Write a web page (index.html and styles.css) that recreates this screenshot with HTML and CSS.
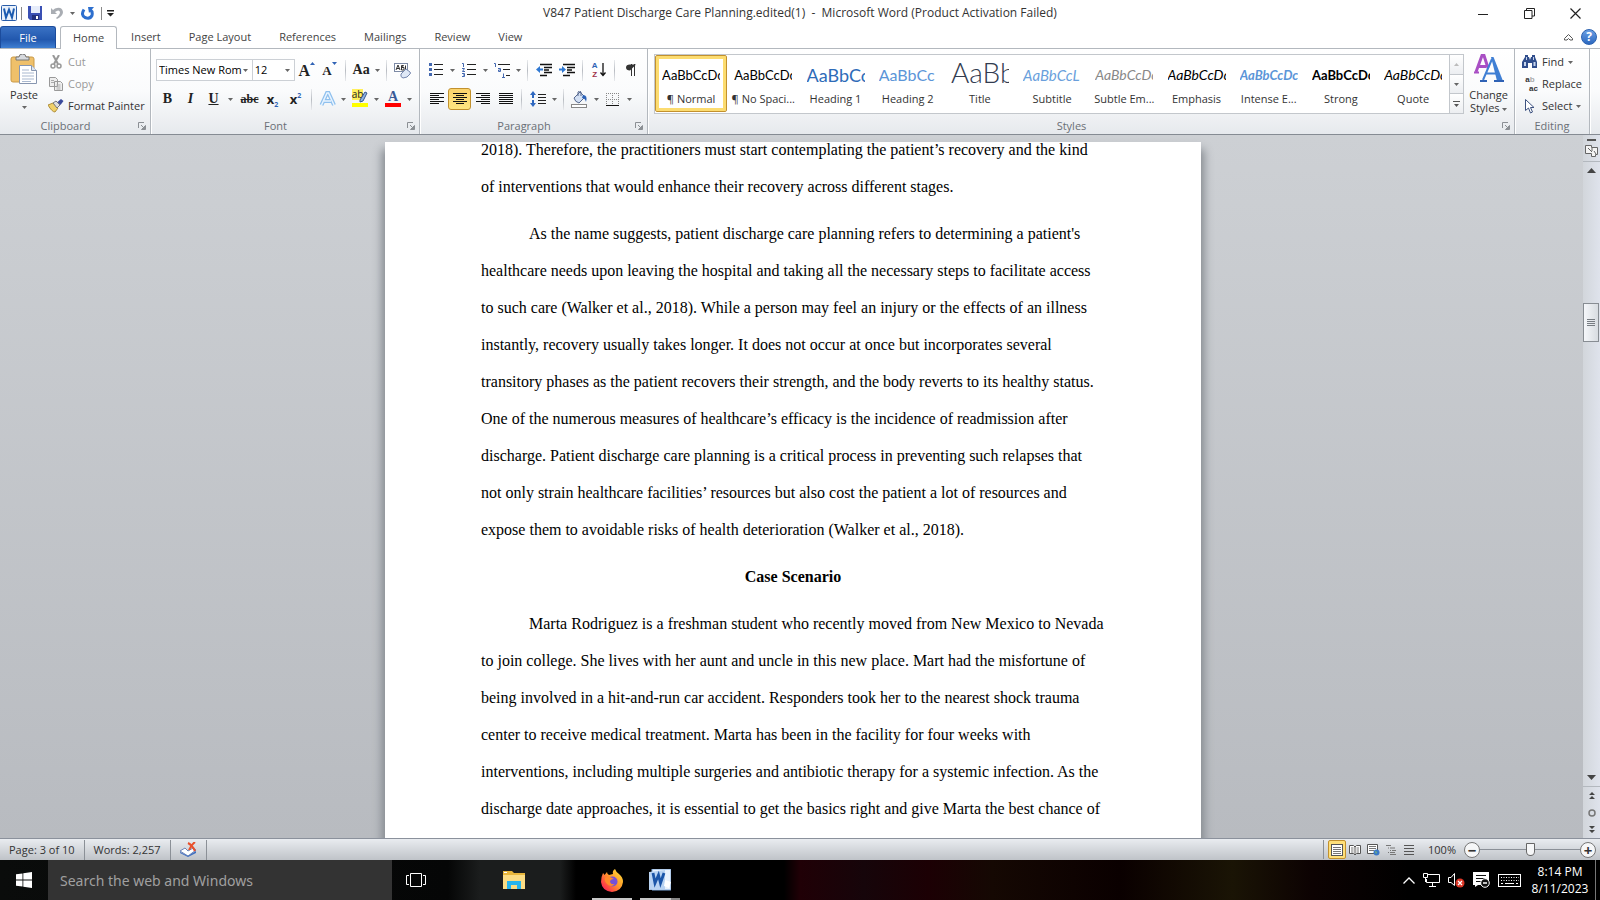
FILE: index.html
```
<!DOCTYPE html>
<html lang="en">
<head>
    <meta charset="UTF-8">
    <meta name="viewport" content="width=device-width, initial-scale=1.0">
    <title>V847 Patient Discharge Care Planning.edited(1) - Microsoft Word</title>
    <link rel="stylesheet" href="styles.css">
</head>
<body>
    <!-- shared icons -->
    <svg class="defs" aria-hidden="true">
        <symbol id="caret" viewBox="0 0 5 3"><path d="M0 0h5L2.500 3z" fill="#666"/></symbol>
        <symbol id="launcher" viewBox="0 0 8 8"><path d="M.5 6V.5H6" fill="none" stroke="#8b8f94"/><path d="M3 3l3 3M7.500 3.500v4h-4z" fill="#8b8f94" stroke="#8b8f94"/></symbol>
    </svg>

    <header class="titlebar">
        <div class="quick">
            <svg width="16" height="16" viewBox="0 0 16 16"><rect x=".5" y=".5" width="15" height="15" rx="1" fill="#e9f1fb" stroke="#2a5da8"/><path d="M3 3.500l2 9 3-8 3 8 2-9" fill="none" stroke="#1c5bb0" stroke-width="2"/></svg>
            <span class="bar"></span>
            <button class="icon" aria-label="Save"><svg width="14" height="14" viewBox="0 0 14 14"><path d="M0 0h14v14H2l-2-2z" fill="#3a50b4"/><rect x="3" width="9" height="7" fill="#e6ecfa"/><rect x="4" y="9" width="7" height="5" fill="#22307c"/><rect x="8" y="10" width="2" height="3" fill="#fff"/></svg></button>
            <button class="icon" aria-label="Undo"><svg width="14" height="13" viewBox="0 0 14 13"><path d="M1 1v6h6L5 5q4-3 5 0 0 3-4 6l1 1q6-3 6-7-1-5-6-4Q5 1 3 3z" fill="#a9adb3"/></svg></button>
            <svg class="caret" width="5" height="3"><use href="#caret"/></svg>
            <button class="icon" aria-label="Repeat"><svg width="14" height="13" viewBox="0 0 14 13"><path d="M3 2.500Q-.5 8 4 10.500q5 2 7-2 1-4-2-6" fill="none" stroke="#2d6fce" stroke-width="3"/><path d="M7 0h6L8 6z" fill="#2d6fce"/></svg></button>
            <span class="bar"></span>
            <button class="icon small" aria-label="Customize Quick Access Toolbar"><svg width="7" height="7" viewBox="0 0 7 7"><path d="M0 0h7v1.500H0zM0 3h7L3.500 6.500z" fill="#222"/></svg></button>
        </div>
        <div class="doc-title">V847 Patient Discharge Care Planning.edited(1)&nbsp; -&nbsp; Microsoft Word (Product Activation Failed)</div>
        <div class="window-buttons">
            <button aria-label="Minimize"><svg width="11" height="11" viewBox="0 0 11 11"><path d="M0 6.500h10" stroke="#222"/></svg></button>
            <button aria-label="Restore"><svg width="11" height="11" viewBox="0 0 11 11"><path d="M.5 2.500h7.500v8H.5zM2.500 2.500v-2h8v7.500H8" fill="none" stroke="#222"/></svg></button>
            <button aria-label="Close"><svg width="11" height="11" viewBox="0 0 11 11"><path d="M.5.5l10 10M10.500.5l-10 10" stroke="#222" stroke-width="1.200"/></svg></button>
        </div>
    </header>

    <nav class="tabs">
        <button class="tab file">File</button>
        <button class="tab active">Home</button>
        <button class="tab">Insert</button>
        <button class="tab">Page Layout</button>
        <button class="tab">References</button>
        <button class="tab">Mailings</button>
        <button class="tab">Review</button>
        <button class="tab">View</button>
        <span class="tabs-end">
            <button class="icon" aria-label="Minimize the Ribbon"><svg width="9" height="7" viewBox="0 0 9 7"><path d="M.5 4.500l4-4 4 4v1.500H6L4.500 4.500 3 6H.5z" fill="#fff" stroke="#555"/></svg></button>
            <button class="help" aria-label="Help">?</button>
        </span>
    </nav>

    <div class="ribbon">
        <section class="group clipboard">
            <div class="group-body">
                <button class="paste">
                    <svg width="28" height="30" viewBox="0 0 28 30"><rect x="1" y="3" width="23" height="25" rx="2" fill="#efc06a" stroke="#c99a48"/><path d="M6 6V3h3q0-3 3.500-3T16 3h3v3z" fill="#d6d9de" stroke="#777"/><path d="M9.500 11.500h12l5 5v13h-17z" fill="#fff" stroke="#8796b0"/><path d="M21.500 11.500v5h5" fill="#dde6f3" stroke="#8796b0"/><path d="M12 16h7M12 19h12M12 22h12M12 25h12M12 27.500h9" stroke="#a9b8cf"/></svg>
                    <span>Paste</span>
                    <svg class="caret" width="5" height="3"><use href="#caret"/></svg>
                </button>
                <div class="stack">
                    <button class="line disabled"><svg width="16" height="14" viewBox="0 0 16 14"><path d="M5 0l5 9M11 0L6 9" stroke="#999" stroke-width="2"/><circle cx="5" cy="11" r="2" fill="none" stroke="#999" stroke-width="1.500"/><circle cx="11" cy="11" r="2" fill="none" stroke="#999" stroke-width="1.500"/></svg>Cut</button>
                    <button class="line disabled"><svg width="16" height="14" viewBox="0 0 16 14"><path d="M1.500.5h6l2 2v7h-8zM6.500 4.500h6l2 2v7h-8z" fill="#eee" stroke="#999"/><path d="M3 3.500h3M3 5.500h3M8.500 8h4M8.500 10h4M8.500 12h4" stroke="#aaa"/></svg>Copy</button>
                    <button class="line"><svg width="16" height="14" viewBox="0 0 16 14"><path d="M0 6l5-2 5 5-3 4q-3 0-7-7z" fill="#f0d069" stroke="#b0903c"/><path d="M5 4l3-2 4 4-3 3z" fill="#ddd" stroke="#777"/><path d="M9.500 3L13 0l2.500 2-3 4z" fill="#3a4a9c"/></svg>Format Painter</button>
                </div>
            </div>
            <footer class="group-label"><span>Clipboard</span><svg width="8" height="8"><use href="#launcher"/></svg></footer>
        </section>

        <section class="group font">
            <div class="group-body rows">
                <div class="row">
                    <div class="combo family"><select aria-label="Font"><option>Times New Rom</option></select><svg class="caret" width="5" height="3"><use href="#caret"/></svg></div>
                    <div class="combo size"><select aria-label="Font Size"><option>12</option></select><svg class="caret" width="5" height="3"><use href="#caret"/></svg></div>
                    <button class="tool serif grow" aria-label="Grow Font">A<svg width="5" height="3" viewBox="0 0 5 3"><path d="M0 3h5L2.500 0z" fill="#2f62b5"/></svg></button>
                    <button class="tool serif shrink" aria-label="Shrink Font">A<svg width="5" height="3" viewBox="0 0 5 3"><path d="M0 0h5L2.500 3z" fill="#2f62b5"/></svg></button>
                    <i class="sep"></i>
                    <button class="tool serif case">Aa</button><button class="drop" aria-label="Change Case"><svg width="5" height="3"><use href="#caret"/></svg></button>
                    <i class="sep"></i>
                    <button class="tool" aria-label="Clear Formatting"><svg width="17" height="17" viewBox="0 0 17 17"><rect x=".5" y="1.500" width="13" height="8" fill="#fff" stroke="#7c8aa5"/><path d="M2 8l2-5 2 5M3 6.500h2M7.500 8V3.500h2L8 5.500h2V8zM11.500 3.500v4" fill="none" stroke="#333"/><path d="M7 12l5-5 4 3q1 1 0 2l-3 3-4 1q-3-1-2-4z" fill="#dfe8f6" stroke="#7486ad"/></svg></button>
                </div>
                <div class="row">
                    <div class="cluster">
                        <button class="tool serif bold">B</button>
                        <button class="tool serif italic">I</button>
                        <button class="tool serif underline">U</button><button class="drop" aria-label="Underline style"><svg width="5" height="3"><use href="#caret"/></svg></button>
                    </div>
                    <div class="cluster">
                        <button class="tool strike">abc</button>
                        <button class="tool script">x<sub>2</sub></button>
                        <button class="tool script">x<sup>2</sup></button>
                    </div>
                    <i class="sep"></i>
                    <button class="tool" aria-label="Text Effects"><svg width="17" height="16" viewBox="0 0 17 16"><path d="M2.500 14L8 2h1.500L15 14M5 10h7" fill="none" stroke="#8fc0ee" stroke-width="4"/><path d="M2.500 14L8 2h1.500L15 14M5 10h7" fill="none" stroke="#e9f4ff" stroke-width="1.500"/></svg></button><button class="drop" aria-label="Text Effects menu"><svg width="5" height="3"><use href="#caret"/></svg></button>
                    <button class="tool marker" aria-label="Text Highlight Color"><span>ab</span><svg width="16" height="16" viewBox="0 0 16 16"><path d="M8 9l5-8 2 1-4 8-3 1z" fill="#8fb2e2" stroke="#36568f"/><path d="M0 12h16v4H0z" fill="#ff0"/></svg></button><button class="drop" aria-label="Highlight menu"><svg width="5" height="3"><use href="#caret"/></svg></button>
                    <button class="tool serif color" aria-label="Font Color">A</button><button class="drop" aria-label="Font Color menu"><svg width="5" height="3"><use href="#caret"/></svg></button>
                </div>
            </div>
            <footer class="group-label"><span>Font</span><svg width="8" height="8"><use href="#launcher"/></svg></footer>
        </section>

        <section class="group paragraph">
            <div class="group-body rows">
                <div class="row">
                    <button class="tool" aria-label="Bullets"><svg width="14" height="14" viewBox="0 0 14 14"><path d="M0 0h3v3H0zM0 5h3v3H0zM0 10h3v3H0z" fill="#4368b0"/><path d="M5 1.500h9M5 6.500h9M5 11.500h9" stroke="#222"/></svg></button><button class="drop" aria-label="Bullets menu"><svg width="5" height="3"><use href="#caret"/></svg></button>
                    <button class="tool" aria-label="Numbering"><svg width="14" height="14" viewBox="0 0 14 14"><path d="M0 .5h1.500V4M0 5.500h2.500L.5 8.500H3M0 10.500h2.500v3H0M1 12h1" fill="none" stroke="#4368b0"/><path d="M5 1.500h9M5 6.500h9M5 11.500h9" stroke="#222"/></svg></button><button class="drop" aria-label="Numbering menu"><svg width="5" height="3"><use href="#caret"/></svg></button>
                    <button class="tool" aria-label="Multilevel List"><svg width="16" height="15" viewBox="0 0 16 15"><path d="M0 .5h1.500V4M4 5.500h2.500v3H4.500V7h2M9.500 10.500v4M8 14.500h3" fill="none" stroke="#4368b0"/><path d="M4 1.500h12M9 6.500h7M12 12.500h4" stroke="#222"/></svg></button><button class="drop" aria-label="Multilevel menu"><svg width="5" height="3"><use href="#caret"/></svg></button>
                    <i class="sep"></i>
                    <button class="tool" aria-label="Decrease Indent"><svg width="16" height="14" viewBox="0 0 16 14"><path d="M4 1.500h12M8 4.500h8M8 7h5M8 9.500h8M4 12.500h7" stroke="#111" stroke-width="1.500"/><path d="M0 6.500L4 3v2.500h3v2H4V10z" fill="#2f78d2"/></svg></button>
                    <button class="tool" aria-label="Increase Indent"><svg width="16" height="14" viewBox="0 0 16 14"><path d="M4 1.500h12M8 4.500h8M8 7h5M8 9.500h8M4 12.500h7" stroke="#111" stroke-width="1.500"/><path d="M7 6.500L3 3v2.500H0v2h3V10z" fill="#2f78d2"/></svg></button>
                    <i class="sep"></i>
                    <button class="tool sort" aria-label="Sort"><span class="az"><b>A</b><b>Z</b></span><svg width="6" height="14" viewBox="0 0 6 14"><path d="M3 0v12M.5 9.500L3 12.500l2.500-3" fill="none" stroke="#111" stroke-width="1.300"/></svg></button>
                    <i class="sep"></i>
                    <button class="tool" aria-label="Show/Hide ¶"><svg width="10" height="13" viewBox="0 0 10 13"><path d="M10 .5H4q-4 0-4 3t4 3z" fill="#333"/><path d="M5.500 0v12M8.500 0v12" stroke="#333"/></svg></button>
                </div>
                <div class="row">
                    <button class="tool" aria-label="Align Left"><svg width="14" height="12" viewBox="0 0 14 12"><path d="M0 .5h14M0 2.500h9M0 4.500h14M0 6.500h9M0 8.500h14M0 10.500h9" stroke="#111"/></svg></button>
                    <button class="tool selected" aria-label="Center"><svg width="14" height="12" viewBox="0 0 14 12"><path d="M0 .5h14M3 2.500h8M0 4.500h14M3 6.500h8M0 8.500h14M3 10.500h8" stroke="#111"/></svg></button>
                    <button class="tool" aria-label="Align Right"><svg width="14" height="12" viewBox="0 0 14 12"><path d="M0 .5h14M5 2.500h9M0 4.500h14M5 6.500h9M0 8.500h14M5 10.500h9" stroke="#111"/></svg></button>
                    <button class="tool" aria-label="Justify"><svg width="14" height="12" viewBox="0 0 14 12"><path d="M0 .5h14M0 2.500h14M0 4.500h14M0 6.500h14M0 8.500h14M0 10.500h14" stroke="#111"/></svg></button>
                    <i class="sep"></i>
                    <button class="tool" aria-label="Line Spacing"><svg width="16" height="16" viewBox="0 0 16 16"><path d="M3 0L0 4h2v3h2V4h2zM3 16l-3-4h2V9h2v3h2z" fill="#2f68c0"/><path d="M8 3.500h8M8 6.500h8M8 9.500h8M8 12.500h8" stroke="#222"/></svg></button><button class="drop" aria-label="Line Spacing menu"><svg width="5" height="3"><use href="#caret"/></svg></button>
                    <i class="sep"></i>
                    <button class="tool" aria-label="Shading"><svg width="17" height="17" viewBox="0 0 17 17"><path d="M3 7l6-6 5 5-6 6q-4-1-5-5z" fill="#d3e0f4" stroke="#56688f"/><path d="M7 5V1q2-2 3 0v4" fill="none" stroke="#56688f"/><path d="M12 4q5 0 3 7-1-4-4-4z" fill="#2b62b8"/><rect x=".5" y="13.500" width="15" height="3" fill="#fff" stroke="#888"/></svg></button><button class="drop" aria-label="Shading menu"><svg width="5" height="3"><use href="#caret"/></svg></button>
                    <button class="tool" aria-label="Borders"><svg width="13" height="13" viewBox="0 0 13 13"><path d="M0 .5h13M0 6.500h13M.5 0v13M6.500 0v13M12.500 0v13" stroke="#888" stroke-dasharray="1 1"/><path d="M0 12.500h13" stroke="#111"/></svg></button><button class="drop" aria-label="Borders menu"><svg width="5" height="3"><use href="#caret"/></svg></button>
                </div>
            </div>
            <footer class="group-label"><span>Paragraph</span><svg width="8" height="8"><use href="#launcher"/></svg></footer>
        </section>

        <section class="group styles">
            <div class="group-body">
                <div class="gallery">
                    <button class="style current"><span class="sample">AaBbCcDc</span><span>¶ Normal</span></button>
                    <button class="style"><span class="sample">AaBbCcDc</span><span>¶ No Spaci...</span></button>
                    <button class="style"><span class="sample h1">AaBbCc</span><span>Heading 1</span></button>
                    <button class="style"><span class="sample h2">AaBbCc</span><span>Heading 2</span></button>
                    <button class="style"><span class="sample title">AaBb</span><span>Title</span></button>
                    <button class="style"><span class="sample subtitle">AaBbCcL</span><span>Subtitle</span></button>
                    <button class="style"><span class="sample subtle">AaBbCcDc</span><span>Subtle Em...</span></button>
                    <button class="style"><span class="sample em">AaBbCcDc</span><span>Emphasis</span></button>
                    <button class="style"><span class="sample intense">AaBbCcDc</span><span>Intense E...</span></button>
                    <button class="style"><span class="sample strong">AaBbCcDc</span><span>Strong</span></button>
                    <button class="style"><span class="sample em">AaBbCcDc</span><span>Quote</span></button>
                    <div class="gallery-scroll">
                        <button class="off" aria-label="Row up"><svg width="5" height="3" viewBox="0 0 5 3"><path d="M0 3h5L2.500 0z" fill="#bbb"/></svg></button>
                        <button aria-label="Row down"><svg width="5" height="3"><use href="#caret"/></svg></button>
                        <button aria-label="More styles"><svg width="7" height="6" viewBox="0 0 7 6"><path d="M0 0h7v1H0zM1 3h5L3.500 6z" fill="#555"/></svg></button>
                    </div>
                </div>
                <button class="change">
                    <svg width="30" height="28" viewBox="0 0 30 28"><path d="M2 18L8 1.500h2L14 14M4 12.500h8" fill="none" stroke="#a94fc4" stroke-width="3"/><path d="M0 18.500h5" stroke="#a94fc4" stroke-width="2"/><path d="M17 3h2.500L29 27h-6z" fill="#3f7fd4"/><path d="M9 26L18 5M12.500 19.500h11" fill="none" stroke="#3f7fd4" stroke-width="2"/><path d="M6 27h7M20 27h10" stroke="#2f62b5" stroke-width="2"/></svg>
                    <span>Change</span>
                    <span>Styles <svg class="caret" width="5" height="3"><use href="#caret"/></svg></span>
                </button>
            </div>
            <footer class="group-label"><span>Styles</span><svg width="8" height="8"><use href="#launcher"/></svg></footer>
        </section>

        <section class="group editing">
            <div class="group-body">
                <div class="stack">
                    <button class="line"><svg width="16" height="14" viewBox="0 0 16 14"><path d="M3 0h3v2h1l1 3 1-3h1V0h3v2l2 5v6h-5V8H6v5H0V7l3-5z" fill="#2f4d8c"/><path d="M2 7h2v4H2zM11.500 7h2v4h-2zM4 2h1v3H4zM11 2h1v3h-1z" fill="#c5d3ec"/></svg>Find<svg class="caret" width="5" height="3"><use href="#caret"/></svg></button>
                    <button class="line"><span class="swap" aria-hidden="true"><b>a<i>b</i></b><b>ac</b></span>Replace</button>
                    <button class="line"><svg width="16" height="15" viewBox="0 0 16 15"><path d="M3.500.5v11l3-2.500 2 5 2-1-2-4.500h3.500z" fill="#fff" stroke="#3d5280"/></svg>Select<svg class="caret" width="5" height="3"><use href="#caret"/></svg></button>
                </div>
            </div>
            <footer class="group-label plain"><span>Editing</span></footer>
        </section>
    </div>

    <div class="workspace">
        <main class="canvas">
            <article class="page">
                <p class="cont">2018). Therefore, the practitioners must start contemplating the patient’s recovery and the kind<br>
                of interventions that would enhance their recovery across different stages.</p>
                <p>As the name suggests, patient discharge care planning refers to determining a patient's<br>
                healthcare needs upon leaving the hospital and taking all the necessary steps to facilitate access<br>
                to such care (Walker et al., 2018). While a person may feel an injury or the effects of an illness<br>
                instantly, recovery usually takes longer. It does not occur at once but incorporates several<br>
                transitory phases as the patient recovers their strength, and the body reverts to its healthy status.<br>
                One of the numerous measures of healthcare’s efficacy is the incidence of readmission after<br>
                discharge. Patient discharge care planning is a critical process in preventing such relapses that<br>
                not only strain healthcare facilities’ resources but also cost the patient a lot of resources and<br>
                expose them to avoidable risks of health deterioration (Walker et al., 2018).</p>
                <h2>Case Scenario</h2>
                <p>Marta Rodriguez is a freshman student who recently moved from New Mexico to Nevada<br>
                to join college. She lives with her aunt and uncle in this new place. Mart had the misfortune of<br>
                being involved in a hit-and-run car accident. Responders took her to the nearest shock trauma<br>
                center to receive medical treatment. Marta has been in the facility for four weeks with<br>
                interventions, including multiple surgeries and antibiotic therapy for a systemic infection. As the<br>
                discharge date approaches, it is essential to get the basics right and give Marta the best chance of</p>
            </article>
        </main>
        <div class="scrollbar">
            <button class="ruler" aria-label="View Ruler"><svg width="13" height="20" viewBox="0 0 13 20"><path d="M2 1h9v2H2z" fill="#555"/><path d="M.5 7.500h6v2h6v7h-2v2h-4v-3h-6z" fill="#f4f4f4" stroke="#666"/><path d="M3 10l4 4M7 10v3M9 13l2 3" stroke="#666"/></svg></button>
            <button class="arrow" aria-label="Scroll up"><svg width="9" height="5" viewBox="0 0 9 5"><path d="M0 5h9L4.500 0z" fill="#444"/></svg></button>
            <div class="track">
                <div class="above"></div>
                <div class="thumb"><i></i></div>
                <div class="below"></div>
            </div>
            <button class="arrow" aria-label="Scroll down"><svg width="9" height="5" viewBox="0 0 9 5"><path d="M0 0h9L4.500 5z" fill="#444"/></svg></button>
            <div class="browse">
                <button aria-label="Previous Page"><svg width="6" height="7" viewBox="0 0 6 7"><path d="M0 3h6L3 0zM0 7h6L3 4z" fill="#444"/></svg></button>
                <button aria-label="Select Browse Object"><svg width="8" height="8" viewBox="0 0 8 8"><circle cx="4" cy="4" r="3" fill="none" stroke="#777" stroke-width="1.500"/></svg></button>
                <button aria-label="Next Page"><svg width="6" height="7" viewBox="0 0 6 7"><path d="M0 0h6L3 3zM0 4h6L3 7z" fill="#444"/></svg></button>
            </div>
        </div>
    </div>

    <footer class="statusbar">
        <button class="status">Page: 3 of 10</button>
        <button class="status">Words: 2,257</button>
        <button class="status proof" aria-label="Proofing errors"><svg width="17" height="15" viewBox="0 0 17 15"><path d="M0 9l5-3 3 3 5-3 3 2-8 6z" fill="#fff" stroke="#6a83b8"/><path d="M0 10l8 4 8-5v2l-8 4-8-4z" fill="#3c6dc0"/><path d="M8 1q4 2 7 8M15 0q-4 3-6 8" fill="none" stroke="#e8502c" stroke-width="2"/></svg></button>
        <div class="views">
            <button class="view on" aria-label="Print Layout"><svg width="12" height="12" viewBox="0 0 12 12"><rect x=".5" y=".5" width="11" height="11" fill="#fff" stroke="#555"/><path d="M2 3.500h8M2 5.500h8M2 7.500h8M2 9.500h8" stroke="#777"/></svg></button>
            <button class="view" aria-label="Full Screen Reading"><svg width="12" height="12" viewBox="0 0 12 12"><path d="M.5 1.500h4L6 3l1.500-1.500h4v8h-4L6 11 4.500 9.500h-4zM6 3v8" fill="#fff" stroke="#555"/><path d="M2 4h2.500M2 6h2.500M2 8h2.500M7.500 4H10M7.500 6H10M7.500 8H10" stroke="#777"/></svg></button>
            <button class="view" aria-label="Web Layout"><svg width="13" height="12" viewBox="0 0 13 12"><path d="M.5.5h10v9H.5z" fill="#fff" stroke="#555"/><path d="M2 2.500h7M2 4.500h7M2 6.500h5" stroke="#777"/><circle cx="9.500" cy="8.500" r="3" fill="#3a79c8"/><path d="M8 7l2 1-1 2z" fill="#7fbf6a"/></svg></button>
            <button class="view" aria-label="Outline"><svg width="10" height="10" viewBox="0 0 10 10"><path d="M0 .5h5M2 3h1M4 3h5M4 5.500h1M6 5.500h4M2 7.500h1M4 7.500h5M4 9.500h6" stroke="#777"/></svg></button>
            <button class="view" aria-label="Draft"><svg width="10" height="10" viewBox="0 0 10 10"><path d="M0 .5h10M0 3.500h10M0 6.500h10M0 9.500h10" stroke="#555"/></svg></button>
        </div>
        <button class="percent">100%</button>
        <button class="round" aria-label="Zoom out">−</button>
        <input class="zoom" type="range" min="0" max="100" value="50" aria-label="Zoom">
        <button class="round" aria-label="Zoom in">+</button>
    </footer>

    <div class="taskbar">
        <button class="task" aria-label="Start"><svg width="16" height="16" viewBox="0 0 16 16"><path d="M0 2.300L6.500 1.400v6.200H0zM7.300 1.200L16 0v7.600H7.300zM0 8.400h6.500v6.200L0 13.700zM7.300 8.400H16V16l-8.700-1.200z" fill="#fff"/></svg></button>
        <input class="search" type="text" placeholder="Search the web and Windows" aria-label="Search the web and Windows">
        <button class="task" aria-label="Task View"><svg width="20" height="15" viewBox="0 0 20 15"><path d="M4.500.5h11v13h-11zM3 2.500H.5v9H3M17 2.500h2.500v9H17" fill="none" stroke="#fff"/></svg></button>
        <button class="task pinned" aria-label="File Explorer"><svg width="22" height="19" viewBox="0 0 22 19"><path d="M0 0h9l2 2h11v16H0z" fill="#e8b63c"/><path d="M0 4h22v14H0z" fill="#fbdc84"/><path d="M1 1h3v1H1z" fill="#fff"/><path d="M4 18V10h14v8h-4v-4H8v4z" fill="#27b4ee"/></svg></button>
        <button class="task pinned open" aria-label="Firefox">
            <svg width="22" height="23" viewBox="0 0 22 23">
                <defs><linearGradient id="fox" x1="1" y1="0" x2="0" y2="1"><stop offset="0" stop-color="#ffe83a"/><stop offset=".45" stop-color="#ff9a2a"/><stop offset=".8" stop-color="#ff3a47"/><stop offset="1" stop-color="#e31587"/></linearGradient></defs>
                <path d="M2 4q1 1 1.500 2L6 3q0 2 2 3l4-1q-1-3 2-5 1 3 4 5 4 3 4 8-1 9-11 10Q1 22 0 13 0 8 2 4z" fill="url(#fox)"/>
                <circle cx="11.500" cy="12.500" r="5" fill="#7550d8"/><path d="M4 9q3-3 7 0l2 1q-4 0-4 3 1 3 5 2-4 4-8 0-3-3-2-6z" fill="#ff8a2a"/>
            </svg>
        </button>
        <button class="task open stacked" aria-label="Microsoft Word"><svg width="22" height="22" viewBox="0 0 22 22"><path d="M3 0h19v21H3z" fill="#eaf2fc" stroke="#7ba5da"/><path d="M0 3l16-2v19L0 21z" fill="#b9d3f2"/><path d="M4 4l2 10 3.500-8 2 8L15 4" fill="none" stroke="#1b55a8" stroke-width="2.800"/><path d="M16 11l6 2-2 6-5-2z" fill="#fff"/></svg></button>
        <div class="tray">
            <svg width="12" height="7" viewBox="0 0 12 7"><path d="M.5 6.500L6 1l5.500 5.500" fill="none" stroke="#fff" stroke-width="1.300"/></svg>
            <svg width="17" height="14" viewBox="0 0 17 14"><path d="M5 1.500h11.500v8H3.500V6M9.500 9.500v4M6 13.500h7M.5.5h4v4h-4zM2.500 4v5" fill="none" stroke="#fff"/></svg>
            <svg width="17" height="15" viewBox="0 0 17 15"><path d="M.5 4.500H3l3.500-4v12L3 9.500H.5z" fill="none" stroke="#fff"/><circle cx="12" cy="10" r="4.500" fill="#dc3626"/><path d="M10 8l4 4M14 8l-4 4" stroke="#fff" stroke-width="1.200"/></svg>
            <svg width="17" height="16" viewBox="0 0 17 16"><path d="M0 0h16v13H5l-3 2v-2H0z" fill="#fff"/><path d="M3 3.500h10M3 6.500h9M3 9.500h5" stroke="#111"/><circle cx="12" cy="11" r="4.300" fill="#111" stroke="#fff"/><path d="M10 11h4" stroke="#fff" stroke-width="1.500"/></svg>
            <svg width="23" height="13" viewBox="0 0 23 13"><rect x=".5" y=".5" width="22" height="12" fill="none" stroke="#fff"/><path d="M3 3.500h18M3 6.500h18" stroke="#fff" stroke-dasharray="1 1.500"/><path d="M3 9.500h2M7 9.500h9M18 9.500h2" stroke="#fff"/></svg>
            <div class="clock"><span>8:14 PM</span><span>8/11/2023</span></div>
        </div>
    </div>
</body>
</html>
```
FILE: styles.css
```
* {
    box-sizing: border-box;
}
body {
    margin: 0;
    height: 100vh;
    display: flex;
    flex-direction: column;
    overflow: hidden;
    background: #fff;
    color: #333;
    font-family: "Open Sans", "Noto Sans", sans-serif;
    font-size: 11px;
    line-height: 14px;
}
button {
    padding: 0;
    border: none;
    background: none;
    color: inherit;
    font: inherit;
    white-space: nowrap;
}
svg {
    display: block;
    flex: none;
}
.defs {
    position: absolute;
    width: 0;
    height: 0;
}

/* title bar */
.titlebar {
    display: grid;
    grid-template-columns: 1fr auto 1fr;
    align-items: center;
    height: 26px;
}
.quick {
    display: flex;
    align-items: center;
    gap: 4px;
    padding-left: 1px;
}
.bar {
    width: 1px;
    height: 13px;
    background: #888;
}
.icon {
    display: flex;
    align-items: center;
    justify-content: center;
    width: 18px;
    height: 18px;
}
.icon.small {
    width: 8px;
}
.doc-title {
    font-size: 12px;
    line-height: 16px;
}
.window-buttons {
    display: flex;
    justify-content: flex-end;
    padding-right: 2px;
}
.window-buttons button {
    display: flex;
    align-items: center;
    justify-content: center;
    width: 46px;
    height: 26px;
}

/* tabs */
.tabs {
    display: flex;
    height: 23px;
    border-bottom: 1px solid #b3b8be;
}
.tab {
    padding: 0 14px;
    height: 22px;
    color: #444;
}
.tab.file {
    width: 56px;
    margin-right: 4px;
    border: 1px solid #1c4c9c;
    border-bottom: none;
    border-radius: 3px 3px 0 0;
    background: linear-gradient(#3a72c4, #2258ae 60%, #3f7fd2);
    color: #fff;
}
.tab.active {
    padding: 0 12px;
    height: 23px;
    border: 1px solid #b3b8be;
    border-bottom: none;
    border-radius: 3px 3px 0 0;
    background: #fff;
}
.tabs-end {
    display: flex;
    align-items: center;
    gap: 4px;
    margin-left: auto;
    padding-right: 3px;
}
.help {
    width: 16px;
    height: 16px;
    border: 1px solid #2b62b0;
    border-radius: 50%;
    background: linear-gradient(#6ba0e4, #2c68c0);
    color: #fff;
    font-size: 12px;
    font-weight: bold;
    line-height: 14px;
}

/* ribbon */
.ribbon {
    display: flex;
    height: 86px;
    border-bottom: 1px solid #858b93;
    background: linear-gradient(#fff, #fafbfc 50%, #e6e9ed);
}
.group {
    display: flex;
    flex-direction: column;
    border-right: 1px solid #b3b8be;
    box-shadow: 1px 0 0 #fff;
}
.clipboard {
    width: 151px;
}
.font {
    width: 269px;
}
.paragraph {
    width: 228px;
}
.styles {
    flex: 1;
}
.editing {
    width: 75px;
    margin-right: 10px;
}
.group-body {
    display: flex;
    flex: 1;
    padding: 2px 5px 0;
}
.group-label {
    display: flex;
    align-items: center;
    gap: 13px;
    height: 17px;
    padding: 0 4px 0 6px;
    color: #6a6f76;
}
.group-label.plain {
    padding: 0;
}
.group-label span {
    flex: 1;
    text-align: center;
}
.paste {
    display: flex;
    flex-direction: column;
    align-items: center;
    width: 38px;
    padding-top: 3px;
}
.paste span {
    margin: 4px 0;
}
.stack {
    display: flex;
    flex-direction: column;
    padding-left: 5px;
}
.line {
    display: flex;
    align-items: center;
    gap: 4px;
    height: 22px;
}
.disabled {
    color: #999;
}
.rows {
    flex-direction: column;
    gap: 5px;
    padding-top: 9px;
}
.row,
.cluster {
    display: flex;
    align-items: center;
}
.row {
    height: 24px;
}
.cluster + .cluster {
    margin-left: 3px;
}
.combo {
    display: flex;
    align-items: center;
    height: 22px;
    padding-right: 4px;
    border: 1px solid #ccd0d5;
    background: #fff;
}
.combo select {
    flex: 1;
    min-width: 0;
    padding: 0 0 0 2px;
    border: none;
    background: none;
    color: #000;
    font: inherit;
    appearance: none;
}
.family {
    width: 98px;
}
.size {
    width: 43px;
    border-left: none;
}
.tool {
    display: flex;
    align-items: center;
    justify-content: center;
    width: 23px;
    height: 22px;
    color: #222;
}
.selected {
    border: 1px solid #c2912e;
    border-radius: 3px;
    background: linear-gradient(#fbd36c, #ffe680);
}
.drop {
    display: flex;
    align-items: center;
    justify-content: center;
    width: 10px;
    height: 22px;
}
.sep {
    width: 1px;
    height: 21px;
    margin: 0 4px;
    background: linear-gradient(#e8eaed, #b9bdc3, #e8eaed);
}
.serif {
    font-family: "Liberation Serif", serif;
    font-size: 14px;
    font-weight: bold;
}
.grow,
.shrink {
    align-items: flex-start;
    padding-top: 3px;
    line-height: 18px;
}
.grow {
    font-size: 16px;
}
.shrink {
    font-size: 13px;
}
.italic {
    font-style: italic;
}
.underline {
    text-decoration: underline;
}
.strike {
    font-family: "Liberation Serif", serif;
    font-size: 12px;
    font-weight: bold;
    text-decoration: line-through;
}
.script {
    font-weight: bold;
    font-size: 13px;
}
.script sub,
.script sup {
    color: #2f62b5;
    font-size: 7px;
    line-height: 7px;
}
.script sub {
    align-self: flex-end;
    margin-bottom: 2px;
}
.script sup {
    align-self: flex-start;
    margin-top: 4px;
}
.marker {
    position: relative;
}
.marker span {
    position: absolute;
    top: 1px;
    left: 3px;
    background: #ffef5c;
    font-size: 10px;
    line-height: 11px;
}
.marker svg {
    position: relative;
}
.color {
    width: 16px;
    height: 16px;
    margin: 0 3px 0 4px;
    border-bottom: 4px solid #f00;
    color: #3a5a98;
    line-height: 12px;
}
.az {
    display: flex;
    flex-direction: column;
    font-family: "Liberation Sans", sans-serif;
    font-size: 8px;
    line-height: 9px;
    color: #a03048;
}
.az b:first-child {
    color: #2f62b5;
}
.sort {
    gap: 2px;
}

/* style gallery */
.styles .group-body {
    padding: 5px 6px 0;
}
.gallery {
    display: flex;
    flex: 1;
    height: 60px;
    border: 1px solid #c3c7cc;
    background: #fff;
}
.style {
    display: flex;
    flex: 1;
    flex-direction: column;
    align-items: center;
    height: 57px;
    padding-top: 3px;
    border: 1px solid transparent;
}
.current {
    border-color: #c2912e;
    border-radius: 2px;
    box-shadow: inset 0 0 0 3px #fcdc70;
}
.sample {
    width: 58px;
    height: 30px;
    margin-bottom: 3px;
    overflow: hidden;
    color: #000;
    font-family: Lato, sans-serif;
    font-size: 13px;
    line-height: 32px;
    text-align: left;
}
.h1 {
    color: #2e6bb8;
    font-size: 18px;
}
.h2 {
    color: #5b95d8;
    font-size: 16px;
}
.title {
    color: #323c50;
    font-size: 28px;
    font-weight: 300;
    line-height: 26px;
}
.subtitle {
    color: #6a9fdc;
    font-style: italic;
    font-size: 15px;
}
.subtle {
    color: #888;
    font-style: italic;
    font-size: 14px;
}
.em {
    font-style: italic;
    font-size: 14px;
}
.intense {
    color: #5b95d8;
    font-weight: bold;
    font-style: italic;
}
.strong {
    font-weight: bold;
}
.gallery-scroll {
    display: flex;
    flex-direction: column;
    width: 14px;
    border-left: 1px solid #c3c7cc;
}
.gallery-scroll button {
    display: flex;
    flex: 1;
    align-items: center;
    justify-content: center;
    border-bottom: 1px solid #c3c7cc;
    background: linear-gradient(#fff, #eceef1);
}
.gallery-scroll button:last-child {
    border-bottom: none;
}
.change {
    display: flex;
    flex-direction: column;
    align-items: center;
    margin-left: 5px;
    line-height: 13px;
}
.change > svg {
    margin-bottom: 6px;
}
.change .caret {
    display: inline-block;
    vertical-align: middle;
}
.editing .stack {
    padding-left: 2px;
}
.swap {
    display: flex;
    flex-direction: column;
    width: 16px;
    font-family: "Liberation Sans", sans-serif;
    font-size: 8px;
    line-height: 9px;
}
.swap i {
    color: #aaa;
    font-style: normal;
}
.swap b:last-child {
    align-self: flex-end;
}

/* document */
.workspace {
    display: flex;
    flex: 1;
    min-height: 0;
}
.canvas {
    flex: 1;
    display: flex;
    justify-content: center;
    padding-top: 7px;
    overflow: hidden;
    background: linear-gradient(#cdd0d4, #b8bbc0);
}
.page {
    width: 816px;
    height: 1056px;
    padding: 0 96px;
    margin-left: 3px;
    background: #fff;
    box-shadow: 0 10px 9px 3px #83888e;
    color: #000;
    font-family: "Liberation Serif", "Times New Roman", serif;
    font-size: 16px;
    line-height: 37px;
    white-space: nowrap;
}
.page p {
    margin: 0 0 10px;
    text-indent: 48px;
}
.page .cont {
    margin-top: -11px;
    text-indent: 0;
}
.page h2 {
    margin: 0 0 10px;
    font-size: 16px;
    text-align: center;
}
.scrollbar {
    display: flex;
    flex-direction: column;
    width: 17px;
    background: linear-gradient(90deg, #d2d6db, #dfe3ec);
}
.scrollbar button {
    display: flex;
    align-items: center;
    justify-content: center;
}
.ruler {
    height: 27px;
    border-bottom: 1px solid #b3b8be;
}
.arrow {
    height: 17px;
}
.track {
    display: flex;
    flex: 1;
    flex-direction: column;
}
.above {
    flex: 125;
}
.below {
    flex: 429;
}
.thumb {
    display: flex;
    align-items: center;
    justify-content: center;
    width: 16px;
    height: 39px;
    border: 1px solid #888d93;
    background: linear-gradient(90deg, #f5f7fa, #d8dce1);
}
.thumb i {
    width: 8px;
    height: 7px;
    background: repeating-linear-gradient(#777c82 0 1px, transparent 1px 2px);
}
.browse {
    display: flex;
    flex-direction: column;
    align-items: center;
    border-top: 1px solid #b3b8be;
}
.browse button {
    height: 17px;
}

/* status bar */
.statusbar {
    display: flex;
    align-items: center;
    height: 22px;
    padding-right: 4px;
    border-top: 1px solid #8b919c;
    background: linear-gradient(#e9ecf0, #bfc3c8);
}
.status {
    height: 20px;
    padding: 0 9px;
    border-right: 1px solid #8b9097;
}
.views {
    display: flex;
    align-items: center;
    margin-left: auto;
    padding-left: 4px;
    border-left: 1px solid #8b9097;
}
.view {
    display: flex;
    align-items: center;
    justify-content: center;
    width: 18px;
    height: 19px;
}
.view.on {
    border: 1px solid #c2912e;
    border-radius: 2px;
    background: #ffe07a;
}
.percent {
    margin: 0 8px 0 10px;
}
.round {
    width: 16px;
    height: 16px;
    border: 1px solid #777;
    border-radius: 50%;
    background: #f6f7f8;
    font-size: 15px;
    font-weight: bold;
    line-height: 12px;
}
.zoom {
    width: 100px;
    height: 16px;
    margin: 0;
    background: linear-gradient(#8b9097, #8b9097) center / 100% 1px no-repeat;
    appearance: none;
}
.zoom::-webkit-slider-thumb {
    width: 9px;
    height: 13px;
    border: 1px solid #666;
    border-radius: 1px 1px 5px 5px;
    background: #f6f7f8;
    appearance: none;
}

/* taskbar */
.taskbar {
    display: flex;
    height: 40px;
    padding-right: 4px;
    background: linear-gradient(90deg, #0a0c0b 0, #050606 28%, #1b1d1d 30%, #1b1d1d 35%, #000 36%, #000 49%, #200006 50%, #16050a 54%, #1c0004 58%, #150803 62%, #0a0000 70%, #1a1405 77%, #0c0202 82%, #000 88%);
    color: #fff;
}
.task {
    display: flex;
    align-items: center;
    justify-content: center;
    width: 48px;
}
.pinned {
    margin-left: 50px;
}
.open {
    background: linear-gradient(#c8c8c8, #c8c8c8) center bottom / 40px 2px no-repeat;
}
.stacked {
    background-image: linear-gradient(90deg, #c8c8c8 31px, #888 31px);
}
.search {
    width: 344px;
    padding: 0 12px;
    border: none;
    background: #333;
    color: #fff;
    font-family: "Noto Sans", sans-serif;
    font-size: 14px;
}
.search::placeholder {
    color: #a0a0a0;
}
.tray {
    display: flex;
    align-items: center;
    gap: 8px;
    margin-left: auto;
    border-right: 1px solid #777;
}
.clock {
    display: flex;
    flex-direction: column;
    width: 66px;
    padding-right: 4px;
    font-size: 12px;
    line-height: 17px;
    text-align: center;
}
```
